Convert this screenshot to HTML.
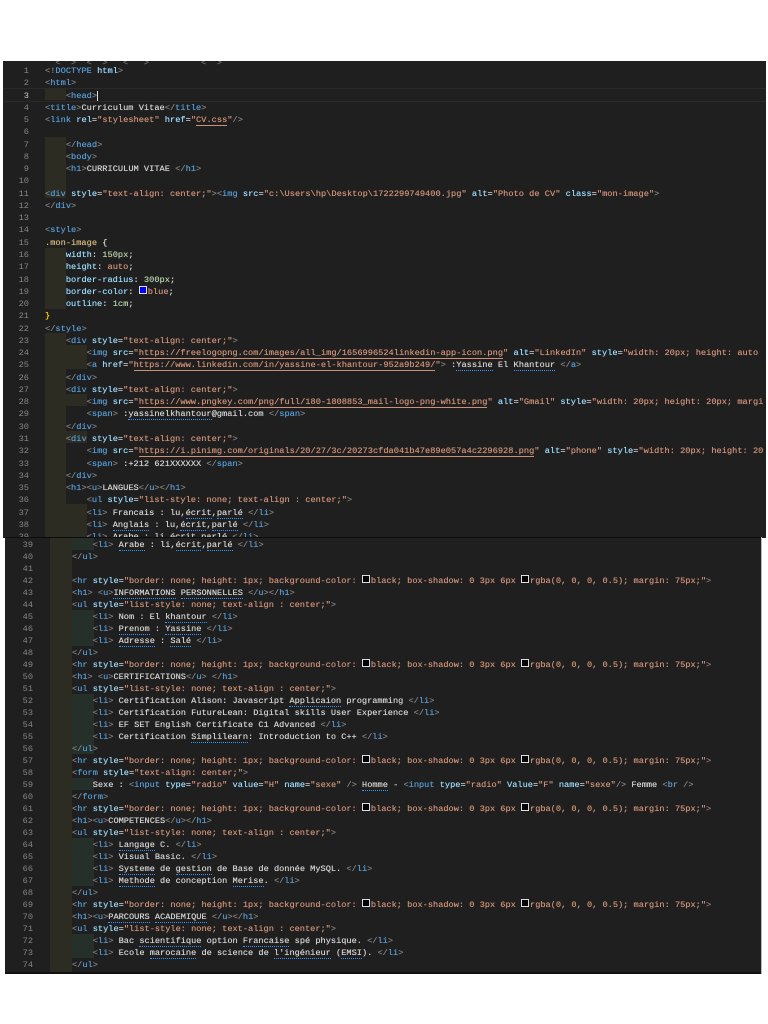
<!DOCTYPE html>
<html><head><meta charset="utf-8">
<style>
body{margin:0;width:768px;height:1024px;background:#fff;position:relative;overflow:hidden;font-family:"Liberation Mono","DejaVu Sans Mono",monospace;}
.panel{position:absolute;background:#1f1f1f;overflow:hidden;}
#top{left:3px;top:61px;width:763px;height:477px;}
#bot{left:5px;top:537px;width:756px;height:434px;border-top:1px solid #0c0c0c;border-bottom:2px solid #111;box-shadow:1px 0 0 #bbb;}
.ln{position:absolute;left:0;text-align:right;color:#858585;}
.cd{position:absolute;white-space:pre;color:#d4d4d4;text-shadow:0 0 0.4px currentColor;}
.t{color:#569cd6}.p{color:#808080}.a{color:#9cdcfe}.s{color:#ce9178}.x{color:#d4d4d4}.c{color:#d7ba7d}.n{color:#b5cea8}
.g1{position:absolute;background:#2c2c22;}
.g2{position:absolute;background:#25302a;}
.sq{border-bottom:1px dotted #3794ff;}
.u{border-bottom:1px solid #ce9178;}
.sw{display:inline-block;width:6px;height:6px;border:1px solid #ddd;vertical-align:0px;margin-right:1px}
</style></head><body>

<div id="top" class="panel" style="font-size:8.68px;">
<div style="position:absolute;right:0;top:-3px;height:6px;color:#888;white-space:pre;left:42px">  &lt;  &gt;  &lt;  &gt;   &lt;   &gt;          &lt;  &gt;</div>
<div class="g1" style="left:42px;width:21px;top:27px;height:12px"></div>
<div class="g1" style="left:42px;width:21px;top:76px;height:61px"></div>
<div class="g1" style="left:42px;width:21px;top:187px;height:61px"></div>
<div class="g1" style="left:42px;width:21px;top:272px;height:210px"></div>
<div class="g1" style="left:63px;width:21px;top:284px;height:24px"></div>
<div class="g1" style="left:63px;width:21px;top:333px;height:12px"></div>
<div class="g1" style="left:63px;width:21px;top:370px;height:12px"></div>
<div class="g1" style="left:63px;width:21px;top:443px;height:40px"></div>
<div style="position:absolute;left:0;right:0;top:27px;height:12px;border-top:1px solid #2a2a2a;border-bottom:1px solid #2a2a2a"></div>
<div class="ln" style="top:4px;line-height:12.27px;white-space:pre;width:26px">1
2
<span style="color:#ccc">3</span>
4
5
6
7
8
9
10
11
12
13
14
15
16
17
18
19
20
21
22
23
24
25
26
27
28
29
30
31
32
33
34
35
36
37
38
39</div>
<div class="cd" style="left:42px;top:4px;line-height:12.27px"><span class="p">&lt;!</span><span class="t">DOCTYPE</span> <span class="a">html</span><span class="p">&gt;</span>
<span class="p">&lt;</span><span class="t">html</span><span class="p">&gt;</span>
    <span class="p">&lt;</span><span class="t">head</span><span class="p">&gt;</span><span style="border-left:1px solid #ddd"></span>
<span class="p">&lt;</span><span class="t">title</span><span class="p">&gt;</span>Curriculum Vitae<span class="p">&lt;/</span><span class="t">title</span><span class="p">&gt;</span>
<span class="p">&lt;</span><span class="t">link</span> <span class="a">rel</span>=<span class="s">"stylesheet"</span> <span class="a">href</span>=<span class="s">"<span class="u">CV.css</span>"</span><span class="p">/&gt;</span>

    <span class="p">&lt;/</span><span class="t">head</span><span class="p">&gt;</span>
    <span class="p">&lt;</span><span class="t">body</span><span class="p">&gt;</span>
    <span class="p">&lt;</span><span class="t">h1</span><span class="p">&gt;</span>CURRICULUM VITAE <span class="p">&lt;/</span><span class="t">h1</span><span class="p">&gt;</span>

<span class="p">&lt;</span><span class="t">div</span> <span class="a">style</span>=<span class="s">"text-align: center;"</span><span class="p">&gt;&lt;</span><span class="t">img</span> <span class="a">src</span>=<span class="s">"c:\Users\hp\Desktop\1722299749400.jpg"</span> <span class="a">alt</span>=<span class="s">"Photo de CV"</span> <span class="a">class</span>=<span class="s">"mon-image"</span><span class="p">&gt;</span>
<span class="p">&lt;/</span><span class="t">div</span><span class="p">&gt;</span>

<span class="p">&lt;</span><span class="t">style</span><span class="p">&gt;</span>
<span class="c">.mon-image</span> {
    <span class="a">width</span>: <span class="n">150px</span>;
    <span class="a">height</span>: <span class="s">auto</span>;
    <span class="a">border-radius</span>: <span class="n">300px</span>;
    <span class="a">border-color</span>: <span class="sw" style="background:#00f"></span><span class="s">blue</span>;
    <span class="a">outline</span>: <span class="n">1cm</span>;
<span style="color:#ffd700">}</span>
<span class="p">&lt;/</span><span class="t">style</span><span class="p">&gt;</span>
    <span class="p">&lt;</span><span class="t">div</span> <span class="a">style</span>=<span class="s">"text-align: center;"</span><span class="p">&gt;</span>
        <span class="p">&lt;</span><span class="t">img</span> <span class="a">src</span>=<span class="s">"<span class="u">https://freelogopng.com/images/all_img/1656996524linkedin-app-icon.png</span>"</span> <span class="a">alt</span>=<span class="s">"LinkedIn"</span> <span class="a">style</span>=<span class="s">"width: 20px; height: auto</span>
        <span class="p">&lt;</span><span class="t">a</span> <span class="a">href</span>=<span class="s">"<span class="u">https://www.linkedin.com/in/yassine-el-khantour-952a9b249/</span>"</span><span class="p">&gt;</span> :<span class="sq">Yassine</span> El <span class="sq">Khantour</span> <span class="p">&lt;/</span><span class="t">a</span><span class="p">&gt;</span>
    <span class="p">&lt;/</span><span class="t">div</span><span class="p">&gt;</span>
    <span class="p">&lt;</span><span class="t">div</span> <span class="a">style</span>=<span class="s">"text-align: center;"</span><span class="p">&gt;</span>
        <span class="p">&lt;</span><span class="t">img</span> <span class="a">src</span>=<span class="s">"<span class="u">https://www.pngkey.com/png/full/180-1808853_mail-logo-png-white.png</span>"</span> <span class="a">alt</span>=<span class="s">"Gmail"</span> <span class="a">style</span>=<span class="s">"width: 20px; height: 20px; margi</span>
        <span class="p">&lt;</span><span class="t">span</span><span class="p">&gt;</span> :<span class="sq">yassinelkhantour</span>@gmail.com <span class="p">&lt;/</span><span class="t">span</span><span class="p">&gt;</span>
    <span class="p">&lt;/</span><span class="t">div</span><span class="p">&gt;</span>
    <span class="p">&lt;</span><span class="t">div</span> <span class="a">style</span>=<span class="s">"text-align: center;"</span><span class="p">&gt;</span>
        <span class="p">&lt;</span><span class="t">img</span> <span class="a">src</span>=<span class="s">"<span class="u">https://i.pinimg.com/originals/20/27/3c/20273cfda041b47e89e057a4c2296928.png</span>"</span> <span class="a">alt</span>=<span class="s">"phone"</span> <span class="a">style</span>=<span class="s">"width: 20px; height: 20</span>
        <span class="p">&lt;</span><span class="t">span</span><span class="p">&gt;</span> :+212 621XXXXXX <span class="p">&lt;/</span><span class="t">span</span><span class="p">&gt;</span>
    <span class="p">&lt;/</span><span class="t">div</span><span class="p">&gt;</span>
    <span class="p">&lt;</span><span class="t">h1</span><span class="p">&gt;&lt;</span><span class="t">u</span><span class="p">&gt;</span>LANGUES<span class="p">&lt;/</span><span class="t">u</span><span class="p">&gt;&lt;/</span><span class="t">h1</span><span class="p">&gt;</span>
        <span class="p">&lt;</span><span class="t">ul</span> <span class="a">style</span>=<span class="s">"list-style: none; text-align : center;"</span><span class="p">&gt;</span>
        <span class="p">&lt;</span><span class="t">li</span><span class="p">&gt;</span> Francais : lu,<span class="sq">écrit</span>,<span class="sq">parlé</span> <span class="p">&lt;/</span><span class="t">li</span><span class="p">&gt;</span>
        <span class="p">&lt;</span><span class="t">li</span><span class="p">&gt;</span> <span class="sq">Anglais</span> : lu,<span class="sq">écrit</span>,<span class="sq">parlé</span> <span class="p">&lt;/</span><span class="t">li</span><span class="p">&gt;</span>
        <span class="p">&lt;</span><span class="t">li</span><span class="p">&gt;</span> Arabe : li,écrit,parlé <span class="p">&lt;/</span><span class="t">li</span><span class="p">&gt;</span></div>
</div>

<div id="bot" class="panel" style="font-size:8.63px;">
<div class="g1" style="left:45px;width:22px;top:0;height:434px"></div>
<div class="g2" style="left:67px;width:22px;top:0;height:12px"></div>
<div class="g2" style="left:67px;width:22px;top:72px;height:36px"></div>
<div class="g2" style="left:67px;width:22px;top:156px;height:60px"></div>
<div class="g2" style="left:67px;width:22px;top:240px;height:12px"></div>
<div class="g2" style="left:67px;width:22px;top:300px;height:48px"></div>
<div class="g2" style="left:67px;width:22px;top:396px;height:24px"></div>
<div class="ln" style="top:1px;line-height:12px;white-space:pre;width:28px">39
40
41
42
43
44
45
46
47
48
49
50
51
52
53
54
55
56
57
58
59
60
61
62
63
64
65
66
67
68
69
70
71
72
73
74</div>
<div class="cd" style="left:67px;top:1px;line-height:12px">    <span class="p">&lt;</span><span class="t">li</span><span class="p">&gt;</span> <span class="sq">Arabe</span> : li,<span class="sq">écrit</span>,<span class="sq">parlé</span> <span class="p">&lt;/</span><span class="t">li</span><span class="p">&gt;</span>
<span class="p">&lt;/</span><span class="t">ul</span><span class="p">&gt;</span>

<span class="p">&lt;</span><span class="t">hr</span> <span class="a">style</span>=<span class="s">"border: none; height: 1px; background-color: <span class="sw" style="background:#000"></span>black; box-shadow: 0 3px 6px <span class="sw" style="background:#000"></span>rgba(0, 0, 0, 0.5); margin: 75px;"</span><span class="p">&gt;</span>
<span class="p">&lt;</span><span class="t">h1</span><span class="p">&gt;</span> <span class="p">&lt;</span><span class="t">u</span><span class="p">&gt;</span><span class="sq">INFORMATIONS</span> <span class="sq">PERSONNELLES</span> <span class="p">&lt;/</span><span class="t">u</span><span class="p">&gt;&lt;/</span><span class="t">h1</span><span class="p">&gt;</span>
<span class="p">&lt;</span><span class="t">ul</span> <span class="a">style</span>=<span class="s">"list-style: none; text-align : center;"</span><span class="p">&gt;</span>
    <span class="p">&lt;</span><span class="t">li</span><span class="p">&gt;</span> Nom : El <span class="sq">khantour</span> <span class="p">&lt;/</span><span class="t">li</span><span class="p">&gt;</span>
    <span class="p">&lt;</span><span class="t">li</span><span class="p">&gt;</span> <span class="sq">Prenom</span> : <span class="sq">Yassine</span> <span class="p">&lt;/</span><span class="t">li</span><span class="p">&gt;</span>
    <span class="p">&lt;</span><span class="t">li</span><span class="p">&gt;</span> <span class="sq">Adresse</span> : <span class="sq">Salé</span> <span class="p">&lt;/</span><span class="t">li</span><span class="p">&gt;</span>
<span class="p">&lt;/</span><span class="t">ul</span><span class="p">&gt;</span>
<span class="p">&lt;</span><span class="t">hr</span> <span class="a">style</span>=<span class="s">"border: none; height: 1px; background-color: <span class="sw" style="background:#000"></span>black; box-shadow: 0 3px 6px <span class="sw" style="background:#000"></span>rgba(0, 0, 0, 0.5); margin: 75px;"</span><span class="p">&gt;</span>
<span class="p">&lt;</span><span class="t">h1</span><span class="p">&gt;</span> <span class="p">&lt;</span><span class="t">u</span><span class="p">&gt;</span>CERTIFICATIONS<span class="p">&lt;/</span><span class="t">u</span><span class="p">&gt;</span> <span class="p">&lt;/</span><span class="t">h1</span><span class="p">&gt;</span>
<span class="p">&lt;</span><span class="t">ul</span> <span class="a">style</span>=<span class="s">"list-style: none; text-align : center;"</span><span class="p">&gt;</span>
    <span class="p">&lt;</span><span class="t">li</span><span class="p">&gt;</span> Certification Alison: Javascript <span class="sq">Applicaion</span> programming <span class="p">&lt;/</span><span class="t">li</span><span class="p">&gt;</span>
    <span class="p">&lt;</span><span class="t">li</span><span class="p">&gt;</span> Certification FutureLean: Digital skills User Experience <span class="p">&lt;/</span><span class="t">li</span><span class="p">&gt;</span>
    <span class="p">&lt;</span><span class="t">li</span><span class="p">&gt;</span> EF SET English Certificate C1 Advanced <span class="p">&lt;/</span><span class="t">li</span><span class="p">&gt;</span>
    <span class="p">&lt;</span><span class="t">li</span><span class="p">&gt;</span> Certification <span class="sq">Simplilearn</span>: Introduction to C++ <span class="p">&lt;/</span><span class="t">li</span><span class="p">&gt;</span>
<span class="p">&lt;/</span><span class="t">ul</span><span class="p">&gt;</span>
<span class="p">&lt;</span><span class="t">hr</span> <span class="a">style</span>=<span class="s">"border: none; height: 1px; background-color: <span class="sw" style="background:#000"></span>black; box-shadow: 0 3px 6px <span class="sw" style="background:#000"></span>rgba(0, 0, 0, 0.5); margin: 75px;"</span><span class="p">&gt;</span>
<span class="p">&lt;</span><span class="t">form</span> <span class="a">style</span>=<span class="s">"text-align: center;"</span><span class="p">&gt;</span>
    Sexe : <span class="p">&lt;</span><span class="t">input</span> <span class="a">type</span>=<span class="s">"radio"</span> <span class="a">value</span>=<span class="s">"H"</span> <span class="a">name</span>=<span class="s">"sexe"</span> <span class="p">/&gt;</span> <span class="sq">Homme</span> - <span class="p">&lt;</span><span class="t">input</span> <span class="a">type</span>=<span class="s">"radio"</span> <span class="a">Value</span>=<span class="s">"F"</span> <span class="a">name</span>=<span class="s">"sexe"</span><span class="p">/&gt;</span> Femme <span class="p">&lt;</span><span class="t">br</span> <span class="p">/&gt;</span>
<span class="p">&lt;/</span><span class="t">form</span><span class="p">&gt;</span>
<span class="p">&lt;</span><span class="t">hr</span> <span class="a">style</span>=<span class="s">"border: none; height: 1px; background-color: <span class="sw" style="background:#000"></span>black; box-shadow: 0 3px 6px <span class="sw" style="background:#000"></span>rgba(0, 0, 0, 0.5); margin: 75px;"</span><span class="p">&gt;</span>
<span class="p">&lt;</span><span class="t">h1</span><span class="p">&gt;&lt;</span><span class="t">u</span><span class="p">&gt;</span>COMPETENCES<span class="p">&lt;/</span><span class="t">u</span><span class="p">&gt;&lt;/</span><span class="t">h1</span><span class="p">&gt;</span>
<span class="p">&lt;</span><span class="t">ul</span> <span class="a">style</span>=<span class="s">"list-style: none; text-align : center;"</span><span class="p">&gt;</span>
    <span class="p">&lt;</span><span class="t">li</span><span class="p">&gt;</span> <span class="sq">Langage</span> C. <span class="p">&lt;/</span><span class="t">li</span><span class="p">&gt;</span>
    <span class="p">&lt;</span><span class="t">li</span><span class="p">&gt;</span> Visual Basic. <span class="p">&lt;/</span><span class="t">li</span><span class="p">&gt;</span>
    <span class="p">&lt;</span><span class="t">li</span><span class="p">&gt;</span> <span class="sq">Systeme</span> de <span class="sq">gestion</span> de Base de donnée MySQL. <span class="p">&lt;/</span><span class="t">li</span><span class="p">&gt;</span>
    <span class="p">&lt;</span><span class="t">li</span><span class="p">&gt;</span> <span class="sq">Methode</span> de conception <span class="sq">Merise</span>. <span class="p">&lt;/</span><span class="t">li</span><span class="p">&gt;</span>
<span class="p">&lt;/</span><span class="t">ul</span><span class="p">&gt;</span>
<span class="p">&lt;</span><span class="t">hr</span> <span class="a">style</span>=<span class="s">"border: none; height: 1px; background-color: <span class="sw" style="background:#000"></span>black; box-shadow: 0 3px 6px <span class="sw" style="background:#000"></span>rgba(0, 0, 0, 0.5); margin: 75px;"</span><span class="p">&gt;</span>
<span class="p">&lt;</span><span class="t">h1</span><span class="p">&gt;&lt;</span><span class="t">u</span><span class="p">&gt;</span><span class="sq">PARCOURS</span> <span class="sq">ACADEMIQUE</span> <span class="p">&lt;/</span><span class="t">u</span><span class="p">&gt;&lt;/</span><span class="t">h1</span><span class="p">&gt;</span>
<span class="p">&lt;</span><span class="t">ul</span> <span class="a">style</span>=<span class="s">"list-style: none; text-align : center;"</span><span class="p">&gt;</span>
    <span class="p">&lt;</span><span class="t">li</span><span class="p">&gt;</span> Bac <span class="sq">scientifique</span> option <span class="sq">Francaise</span> spé physique. <span class="p">&lt;/</span><span class="t">li</span><span class="p">&gt;</span>
    <span class="p">&lt;</span><span class="t">li</span><span class="p">&gt;</span> Ecole <span class="sq">marocaine</span> de science de <span class="sq">l'ingénieur</span> (<span class="sq">EMSI</span>). <span class="p">&lt;/</span><span class="t">li</span><span class="p">&gt;</span>
<span class="p">&lt;/</span><span class="t">ul</span><span class="p">&gt;</span></div>
</div>
</body></html>
